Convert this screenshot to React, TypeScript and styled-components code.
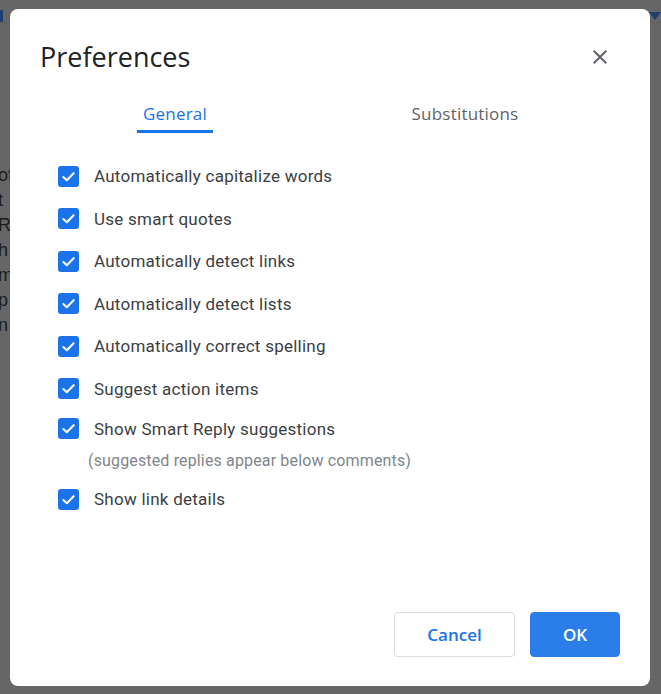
import React from "react";
import styled, { createGlobalStyle } from "styled-components";

const GlobalStyle = createGlobalStyle`
  html, body {
    margin: 0;
    padding: 0;
    background: #666666;
    font-family: Roboto, "Liberation Sans", sans-serif;
  }
`;

const Page = styled.div`
  position: relative;
  width: 661px;
  height: 694px;
  overflow: hidden;
  background: #666666;
`;

const Toolbar = styled.div`
  height: 22px;
  border-bottom: 1px dotted #5a5c5b;
  display: flex;
  align-items: flex-end;
  justify-content: space-between;
`;

const ToolMark = styled.span`
  width: 3px;
  height: 12px;
  background: #1d3f73;
`;

const ToolArrow = styled.span`
  width: 0;
  height: 0;
  margin-bottom: 2px;
  border-left: 6px solid transparent;
  border-right: 6px solid transparent;
  border-top: 8px solid #1d3f73;
`;

const DocStrip = styled.div`
  padding-top: 140px;
  margin-left: -2px;
  display: flex;
  flex-direction: column;
`;

const DocLine = styled.div`
  white-space: nowrap;
  font-family: Arial, "Liberation Sans", sans-serif;
  font-size: 18px;
  line-height: 25px;
  color: #1c1c1c;
`;

const Dialog = styled.div`
  position: absolute;
  left: 10px;
  top: 9px;
  width: 640px;
  height: 677px;
  box-sizing: border-box;
  background: #ffffff;
  border-radius: 8px;
  padding: 32px 30px 29px 30px;
  display: flex;
  flex-direction: column;
`;

const Header = styled.div`
  display: flex;
  align-items: center;
  justify-content: space-between;
  padding-right: 8px;
`;

const Title = styled.h1`
  margin: 0;
  font-family: "Open Sans", sans-serif;
  font-weight: 400;
  font-size: 27px;
  line-height: 32px;
  color: #202124;
`;

const CloseButton = styled.button`
  border: none;
  background: none;
  padding: 0;
  width: 24px;
  height: 24px;
  display: flex;
  cursor: pointer;
`;

const Tabs = styled.div`
  margin: 21px 0 0 -10px;
  display: grid;
  grid-template-columns: 290px 290px;
`;

const Tab = styled.div`
  display: flex;
  justify-content: center;
  padding-top: 10px;
  height: 36px;
  box-sizing: border-box;
`;

const TabLabel = styled.span<{ $active?: boolean }>`
  display: inline-block;
  padding: 0 6px 6px;
  font-family: "Open Sans", sans-serif;
  font-weight: 500;
  font-size: 17px;
  line-height: 20px;
  letter-spacing: 0.2px;
  color: ${(p) => (p.$active ? "#1a73e8" : "#5f6368")};
  border-bottom: 3px solid ${(p) => (p.$active ? "#1a73e8" : "transparent")};
  border-radius: 3px 3px 0 0;
  height: 20px;
`;

const OptionList = styled.div`
  margin-top: 25px;
  padding-left: 18px;
  display: flex;
  flex-direction: column;
`;

const OptionRow = styled.label<{ $compact?: boolean }>`
  display: flex;
  align-items: center;
  gap: 15px;
  height: ${(p) => (p.$compact ? "37px" : "42.5px")};
  cursor: pointer;
`;

const Box = styled.span`
  width: 21px;
  height: 21px;
  border-radius: 3px;
  background: #1a73e8;
  display: flex;
  align-items: center;
  justify-content: center;
  flex: none;
`;

const OptionText = styled.span`
  font-size: 17px;
  color: #3c4043;
  letter-spacing: 0.25px;
`;

const Note = styled.div`
  padding: 3px 0 7px 30px;
  font-size: 16px;
  line-height: 21px;
  letter-spacing: 0.15px;
  color: #80868b;
`;

const Footer = styled.div`
  margin-top: auto;
  display: flex;
  justify-content: flex-end;
  gap: 15px;
`;

const Button = styled.button<{ $primary?: boolean }>`
  height: 45px;
  width: ${(p) => (p.$primary ? "90px" : "121px")};
  border-radius: 4px;
  border: 1px solid ${(p) => (p.$primary ? "#2b7de9" : "#dadce0")};
  background: ${(p) => (p.$primary ? "#2b7de9" : "#ffffff")};
  color: ${(p) => (p.$primary ? "#ffffff" : "#1a73e8")};
  font-family: "Open Sans", sans-serif;
  font-weight: 600;
  font-size: 17px;
  cursor: pointer;
`;

const options = [
  "Automatically capitalize words",
  "Use smart quotes",
  "Automatically detect links",
  "Automatically detect lists",
  "Automatically correct spelling",
  "Suggest action items",
];

// what shows of the document left of the dialog
const docLines = ["of", "t", "R", "h", "m", "p", "n"];

function Check() {
  return (
    <Box>
      <svg width="15" height="15" viewBox="0 0 16 16">
        <path d="M2.5 8.5 L6.2 12 L13.5 4.5" fill="none" stroke="#fff" strokeWidth="2.2" strokeLinecap="round" strokeLinejoin="round" />
      </svg>
    </Box>
  );
}

function Option({ label, compact }: { label: string; compact?: boolean }) {
  return (
    <OptionRow $compact={compact}>
      <Check />
      <OptionText>{label}</OptionText>
    </OptionRow>
  );
}

export default function App() {
  return (
    <Page>
      <GlobalStyle />
      <Toolbar>
        <ToolMark />
        <ToolArrow />
      </Toolbar>
      <DocStrip>
        {docLines.map((l) => (
          <DocLine key={l}>{l}</DocLine>
        ))}
      </DocStrip>
      <Dialog>
        <Header>
          <Title>Preferences</Title>
          <CloseButton aria-label="Close">
            <svg width="24" height="24" viewBox="0 0 24 24">
              <path
                d="M19 6.41L17.59 5 12 10.59 6.41 5 5 6.41 10.59 12 5 17.59 6.41 19 12 13.41 17.59 19 19 17.59 13.41 12z"
                fill="#5f6368"
              />
            </svg>
          </CloseButton>
        </Header>
        <Tabs>
          <Tab>
            <TabLabel $active>General</TabLabel>
          </Tab>
          <Tab>
            <TabLabel>Substitutions</TabLabel>
          </Tab>
        </Tabs>
        <OptionList>
          {options.map((o) => (
            <Option key={o} label={o} />
          ))}
          <Option label="Show Smart Reply suggestions" compact />
          <Note>(suggested replies appear below comments)</Note>
          <Option label="Show link details" />
        </OptionList>
        <Footer>
          <Button>Cancel</Button>
          <Button $primary>OK</Button>
        </Footer>
      </Dialog>
    </Page>
  );
}
